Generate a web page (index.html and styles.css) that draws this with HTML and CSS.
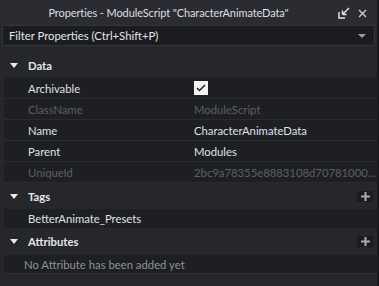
FILE: index.html
```html
<!DOCTYPE html>
<html lang="en">
<head>
  <meta charset="UTF-8">
  <title>Properties</title>
  <link rel="stylesheet" href="styles.css">
</head>
<body>
  <div class="panel">
    <div class="titlebar">
      <span class="title">Properties - ModuleScript "CharacterAnimateData"</span>
      <span class="title-icons">
        <svg width="12" height="12" viewBox="0 0 12 12">
          <path d="M1 5v6h6" fill="none" stroke="#e8e8e8" stroke-width="1.4"/>
          <path d="M4.5 7.5L11 1M4.5 7.5h4M4.5 7.5v-4" fill="none" stroke="#e8e8e8" stroke-width="1.4"/>
        </svg>
        <svg width="9" height="9" viewBox="0 0 9 9">
          <path d="M1 1l7 7M8 1l-7 7" stroke="#d0d0d0" stroke-width="1.3"/>
        </svg>
      </span>
    </div>

    <div class="filter">
      <span>Filter Properties (Ctrl+Shift+P)</span>
      <span class="drop"></span>
    </div>

    <div class="section">
      <div class="sec-head"><span class="tri"></span>Data</div>
      <div class="row">
        <span class="key">Archivable</span>
        <span class="val">
          <span class="check">
            <svg width="10" height="8" viewBox="0 0 10 8"><path d="M1 4l2.5 2.5L9 1" fill="none" stroke="#1e1f23" stroke-width="1.5"/></svg>
          </span>
        </span>
      </div>
      <div class="row off"><span class="key">ClassName</span><span class="val">ModuleScript</span></div>
      <div class="row"><span class="key">Name</span><span class="val">CharacterAnimateData</span></div>
      <div class="row"><span class="key">Parent</span><span class="val">Modules</span></div>
      <div class="row off"><span class="key">UniqueId</span><span class="val">2bc9a78355e8883108d70781000...</span></div>
    </div>

    <div class="section">
      <div class="sec-head tags"><span class="tri"></span>Tags<span class="plus"><svg width="9" height="9" viewBox="0 0 9 9"><path d="M4.5 0v9M0 4.5h9" stroke="#a9abb1" stroke-width="2"/></svg></span></div>
      <div class="row single"><span class="key">BetterAnimate_Presets</span></div>
    </div>

    <div class="section">
      <div class="sec-head attrs"><span class="tri"></span>Attributes<span class="plus"><svg width="9" height="9" viewBox="0 0 9 9"><path d="M4.5 0v9M0 4.5h9" stroke="#a9abb1" stroke-width="2"/></svg></span></div>
      <div class="row single note"><span>No Attribute has been added yet</span></div>
    </div>
  </div>
</body>
</html>
```

FILE: styles.css
```css
body {
  margin: 0;
  background: #26272b;
  font-family: Lato, sans-serif;
  font-size: 11.3px;
  color: #dfe2e8;
}
.panel {
  width: 379px;
  height: 286px;
  overflow: hidden;
  background: #26272b;
  border-right: 2px solid #18191c;
  box-sizing: border-box;
}
.titlebar {
  height: 25px;
  display: flex;
  align-items: center;
  justify-content: center;
  position: relative;
  padding-right: 40px;
  background: #2b2c31;
  color: #dcdfe4;
  font-size: 11px;
  letter-spacing: -0.1px;
}
.title-icons {
  position: absolute;
  right: 10px;
  top: 7px;
  display: flex;
  gap: 8px;
  align-items: center;
}
.filter {
  height: 19px;
  margin: 0 2px 7px 2px;
  padding: 0 8px 0 6px;
  display: flex;
  align-items: center;
  justify-content: space-between;
  background: #1b1c20;
  border: 1px solid #34353a;
  color: #e3e5ea;
}
.drop {
  width: 0;
  height: 0;
  border-left: 4px solid transparent;
  border-right: 4px solid transparent;
  border-top: 4px solid #9a9ca2;
}
.sec-head {
  height: 25px;
  display: flex;
  align-items: center;
  padding-left: 10px;
  font-weight: bold;
  color: #e3e5ea;
  background: #26272b;
}
.sec-head.tags {
  height: 26px;
}
.sec-head.attrs {
  height: 27px;
}
.tri {
  width: 0;
  height: 0;
  border-left: 4px solid transparent;
  border-right: 4px solid transparent;
  border-top: 5px solid #e8e8e8;
  margin-right: 10px;
}
.plus {
  margin-left: auto;
  margin-right: 4px;
  width: 16px;
  height: 11px;
  display: flex;
  align-items: center;
  justify-content: center;
  background: #1b1c20;
}
.row {
  display: flex;
  height: 21px;
  align-items: center;
  margin-left: 4px;
  background: #1e1f23;
  border-bottom: 1px solid #2a2b30;
  box-sizing: border-box;
}
.key {
  width: 190px;
  padding-left: 24px;
  box-sizing: border-box;
}
.val {
  flex: 1;
  display: flex;
  align-items: center;
}
.row.off {
  color: #5c5f66;
}
.row.single {
  height: 19px;
  border-bottom: 0;
}
.note {
  height: 20px;
  padding-left: 20px;
  color: #8e929a;
  border-bottom: 1px solid #2f3035 !important;
}
.check {
  width: 14px;
  height: 14px;
  display: flex;
  align-items: center;
  justify-content: center;
  background: #f4f4f4;
}
```
